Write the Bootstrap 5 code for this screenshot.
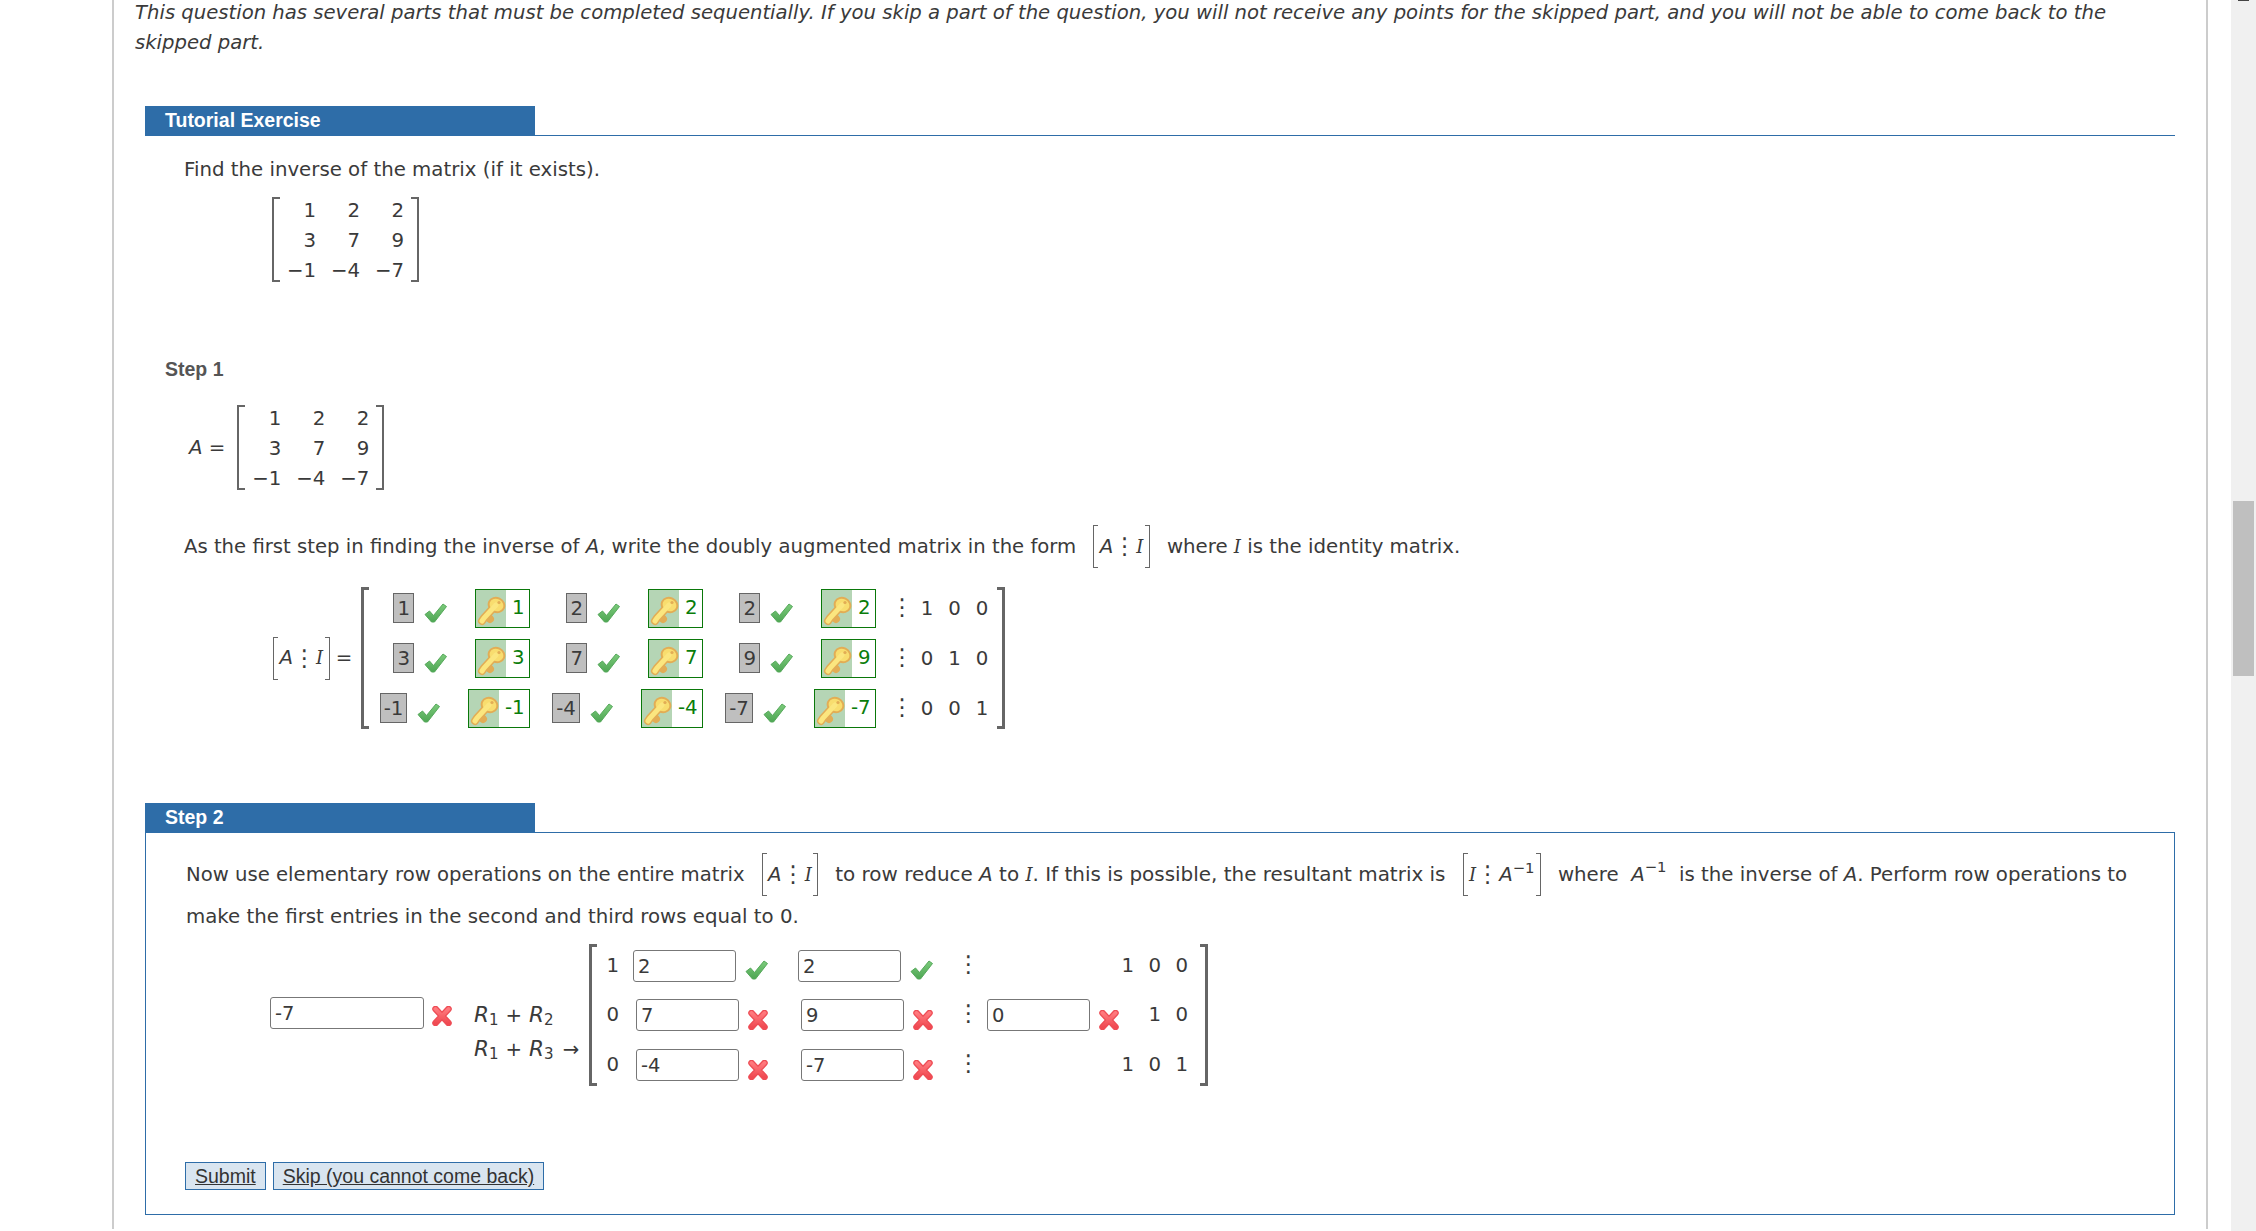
<!DOCTYPE html>
<html lang="en">
<head>
<meta charset="utf-8">
<title>Tutorial Exercise</title>
<link href="https://cdn.jsdelivr.net/npm/bootstrap@5.3.0/dist/css/bootstrap.min.css" rel="stylesheet">
<style>
html,body{height:1231px;overflow:hidden;background:#fff}
body{font-family:"DejaVu Sans",Verdana,sans-serif;font-size:19.75px;line-height:30px;color:#3a3a3a}
.q-shell{width:2231px;flex:none}
.q-col{margin-left:112px;width:2096px;height:1231px;border-left:2px solid #ccc;border-right:2px solid #ccc}
.q-intro{margin:-2px 0 0 21px;width:2000px;font-style:italic;font-size:19.64px}
.q-sec{margin-left:31px;width:2030px}
.q-sec1{margin-top:48px}
.q-bar-wrap{height:30px;border-bottom:1px solid #2e6da8}
.q-bar{width:390px;height:30px;background:#2e6da8;color:#fff;font:bold 19.5px/28px "Liberation Sans",Arial,sans-serif;padding-left:20px}
.q-find{margin:19px 0 12px 39px}
.q-mat{display:flex}
.bk-l,.bk-r{display:block;width:8px;border:2px solid #666;flex:none}
.bk-l{border-right:0}.bk-r{border-left:0}
.q-m3{display:grid;grid-template-columns:44px 44px 44px;grid-auto-rows:30px;justify-items:end;margin:-1px 7px 0 -8px;height:85px;width:132px}
.q-m3>span{display:block}
.q-m1{margin-left:127px;height:85px}
.q-step1{font:bold 19.5px/30px "Liberation Sans",Arial,sans-serif;color:#555;margin:72px 0 21px 20px}
.q-ar{display:flex;height:85px;margin-left:44px;align-items:center}
.q-ar .q-mat{height:85px;margin-left:12px}
.q-line{display:flex;align-items:center;height:43px;white-space:pre}
.q-line .mini{margin:0 17px}
.q-seg{font-size:19.65px}
.q-seg2{font-size:19.95px}
.mini{display:inline-flex;height:43px;align-items:center;flex:none}
.mini .bk-l,.mini .bk-r{width:5px;height:43px;border-width:1.5px}
.mini-in{padding:0 1.5px;display:inline-flex;align-items:center;gap:0}
.q-v{font-style:italic}
.q-i{font-family:"DejaVu Serif",serif;font-style:italic;font-size:18px}
.q-dot{font-size:23px;line-height:1}
.q-as{margin:35px 0 19px 39px}
.q-big{display:flex;margin-left:128px;height:142px;align-items:center}
.q-big .mini{margin-right:6px}
.q-eq{width:25px}
.bb-l,.bb-r{display:block;width:8px;height:142px;border:3px solid #666;flex:none}
.bb-l{border-right:0}.bb-r{border-left:0}
.q-big-in{width:628px;padding:2px 0 0 11px;align-self:flex-start}
.q-brow{display:grid;grid-template-columns:150px 173px 173px 38px 27px 28px 27px;height:50px;align-items:start}
.q-cell{display:flex;justify-content:flex-end;align-items:flex-start}
.q-given{height:30px;margin-top:4px;border:1px solid #666;background:#bfbfbf;padding:0 3px;line-height:29px;margin-right:10px;min-width:18px;text-align:center}
.q-chk{width:23px;height:20px;margin-top:14px;margin-right:28px;flex:none}
.q-key{display:flex;height:39px;border:1px solid #0a780a;color:#0a7d0a;line-height:36px}
.q-key i{display:block;width:30px;height:100%;background:#b5d5b5}
.q-key svg{display:block;width:30px;height:37px}
.q-key b{font-weight:400;padding:0 4px 0 6px}
.q-num{padding-top:5px;text-align:center}
.q-ds{padding:7px 0 0 15px;line-height:1}
.q-sec2{margin-top:74px}
.q-box{border:solid #2e6da8;border-width:0 1px 1px;height:382px;padding:20px 0 0 40px}
.q-l2{margin:6px 0 12px}
.q-ops{display:flex;height:142px}
.q-ans{width:103px;height:32px;flex:none;border:1px solid #777;border-radius:3px;padding:0 4px;font:inherit;font-size:19.5px;line-height:28px;color:#3a3a3a;box-shadow:none}
.q-ans-lg{width:154px;margin:53px 0 0 84px}
.q-x{width:20px;height:20px;flex:none}
.q-x0{margin:62px 22px 0 8px}
.q-r{width:115px;margin-top:54px;line-height:33px;flex:none;white-space:nowrap}
.q-r .q-v{font-size:21.5px}
.q-r sub{font-size:15px;bottom:-.2em}
.q-plus{margin:0 7px}
.q-arr{margin-left:3px}
.q-gmat{display:flex;height:142px}
.q-gin{padding:6px 12px 0 2px}
.q-grow{display:grid;grid-template-columns:25px 144px 165px 43px 143px 15px 27px 27px;grid-template-rows:49px 50px 32px}
.q-c2{display:flex;justify-content:flex-end;align-items:flex-start}
.q-c2 .q-chk{margin:10px 0 0 9px}
.q-c2 .q-x{margin:11px 0 0 9px}
.q-t{text-align:right;line-height:32px}
.q-tl{padding-right:5px}
.q-dots{padding:3px 0 0 24px}
.q-btns{margin:76px 0 0 -1px;display:flex;gap:7px}
.q-btn{height:28px;border:1px solid #2e6da8;border-radius:0;background:#d9e5f0;color:#333;font:19.5px/24px "Liberation Sans",Arial,sans-serif;text-decoration:underline;padding:0 9px}
.q-btn:hover{background:#d9e5f0;color:#333;border-color:#2e6da8}
.q-sb{width:25px;height:1231px;background:#f0f0f0;flex:none;padding:0 2px}
.q-mark{height:1px;background:#444;margin:0 5px 500px}
.q-thumb{height:175px;background:#bfbfbf}
</style>
</head>
<body class="d-flex m-0">
<svg width="0" height="0" class="position-absolute">
<defs>
<linearGradient id="g-chk" x1="0" y1="0" x2="0" y2="1"><stop offset="0" stop-color="#7ccb7c"/><stop offset="1" stop-color="#4ea653"/></linearGradient>
<linearGradient id="g-x" x1="0" y1="0" x2="0" y2="1"><stop offset="0" stop-color="#ff7a7e"/><stop offset="1" stop-color="#f04a52"/></linearGradient>
<symbol id="ic-chk" viewBox="0 0 23 20"><polygon points="1,11.5 5.5,8 9.5,12.5 19,1 22.5,3.5 10.5,19 7.5,19" fill="url(#g-chk)" stroke="#55a85a" stroke-width="1"/></symbol>
<symbol id="ic-x" viewBox="0 0 20 20"><path d="M3.5 3 L16.5 17 M16.5 3 L3.5 17" stroke="#ee4c55" stroke-width="6.5" stroke-linecap="round"/><path d="M3.5 3 L16.5 17 M16.5 3 L3.5 17" stroke="url(#g-x)" stroke-width="4" stroke-linecap="round"/></symbol>
<symbol id="ic-key" viewBox="0 0 30 37"><path d="M20 15 L8 28 L6 31 M11 26 L14 29" stroke="#e2ad55" stroke-width="8" stroke-linecap="round" fill="none"/><ellipse cx="20.5" cy="15" rx="8" ry="7" fill="#f8dd6f" stroke="#e2ad55" stroke-width="2" transform="rotate(25 20.5 15)"/><path d="M20 15 L8 28 L6 31" stroke="#fbe67f" stroke-width="5" stroke-linecap="round" fill="none"/><circle cx="23" cy="12.5" r="1.6" fill="#e2ad55"/></symbol>
</defs>
</svg>
<div class="q-shell">
<main class="q-col">
<p class="q-intro">This question has several parts that must be completed sequentially. If you skip a part of the question, you will not receive any points for the skipped part, and you will not be able to come back to the skipped part.</p>

<section class="q-sec q-sec1">
<div class="q-bar-wrap"><div class="q-bar">Tutorial Exercise</div></div>
<div class="q-find">Find the inverse of the matrix (if it exists).</div>
<div class="q-mat q-m1"><span class="bk-l"></span><div class="q-m3"><span>1</span><span>2</span><span>2</span><span>3</span><span>7</span><span>9</span><span>−1</span><span>−4</span><span>−7</span></div><span class="bk-r"></span></div>
<div class="q-step1">Step 1</div>
<div class="q-ar"><span><span class="q-v">A</span> =</span><div class="q-mat"><span class="bk-l"></span><div class="q-m3"><span>1</span><span>2</span><span>2</span><span>3</span><span>7</span><span>9</span><span>−1</span><span>−4</span><span>−7</span></div><span class="bk-r"></span></div></div>
<div class="q-line q-as"><span class="q-seg">As the first step in finding the inverse of <span class="q-v">A</span>, write the doubly augmented matrix in the form</span><span class="mini"><span class="bk-l"></span><span class="mini-in"><span class="q-v">A</span><span class="q-dot">⋮</span><span class="q-i">I</span></span><span class="bk-r"></span></span>where <span class="q-i">I</span> is the identity matrix.</div>

<div class="q-big">
<span class="mini"><span class="bk-l"></span><span class="mini-in"><span class="q-v">A</span><span class="q-dot">⋮</span><span class="q-i">I</span></span><span class="bk-r"></span></span><span class="q-eq">=</span>
<span class="bb-l"></span>
<div class="q-big-in" id="aug"></div>
<span class="bb-r"></span>
</div>
</section>

<section class="q-sec q-sec2">
<div class="q-bar-wrap"><div class="q-bar">Step 2</div></div>
<div class="q-box">
<div class="q-line"><span class="q-seg">Now use elementary row operations on the entire matrix</span><span class="mini"><span class="bk-l"></span><span class="mini-in"><span class="q-v">A</span><span class="q-dot">⋮</span><span class="q-i">I</span></span><span class="bk-r"></span></span><span class="q-seg2">to row reduce <span class="q-v">A</span> to <span class="q-i">I</span>. If this is possible, the resultant matrix is</span><span class="mini"><span class="bk-l"></span><span class="mini-in"><span class="q-i">I</span><span class="q-dot">⋮</span><span><span class="q-v">A</span><sup>−1</sup></span></span><span class="bk-r"></span></span>where  <span class="q-v">A</span><sup>−1</sup>  is the inverse of <span class="q-v">A</span>. Perform row operations to</div>
<div class="q-l2">make the first entries in the second and third rows equal to 0.</div>
<div class="q-ops">
<input class="form-control q-ans q-ans-lg" value="-7" aria-label="multiplier">
<svg class="q-x q-x0"><use href="#ic-x"/></svg>
<div class="q-r"><span class="q-v">R</span><sub>1</sub><span class="q-plus">+</span><span class="q-v">R</span><sub>2</sub><br><span class="q-v">R</span><sub>1</sub><span class="q-plus">+</span><span class="q-v">R</span><sub>3</sub><span class="q-arr"> →</span></div>
<div class="q-gmat"><span class="bb-l"></span><div class="q-gin"><div class="q-grow" id="grid2"></div></div><span class="bb-r"></span></div>
</div>
<div class="q-btns"><button class="btn q-btn" type="button">Submit</button><button class="btn q-btn" type="button">Skip (you cannot come back)</button></div>
</div>
</section>
</main>
</div>
<aside class="q-sb"><div class="q-mark"></div><div class="q-thumb"></div></aside>

<script>
var chk='<svg class="q-chk"><use href="#ic-chk"/></svg>',xx='<svg class="q-x"><use href="#ic-x"/></svg>',key='<i><svg><use href="#ic-key"/></svg></i>';
var A=[['1','2','2'],['3','7','9'],['-1','-4','-7']],I=[['1','0','0'],['0','1','0'],['0','0','1']];
document.getElementById('aug').innerHTML=A.map(function(r,i){
 return '<div class="q-brow">'+r.map(function(v){return '<div class="q-cell"><span class="q-given">'+v+'</span>'+chk+'<span class="q-key">'+key+'<b>'+v+'</b></span></div>';}).join('')+'<div class="q-ds q-dot">⋮</div>'+I[i].map(function(v){return '<div class="q-num">'+v+'</div>';}).join('')+'</div>';
}).join('');
function inp(v,ic){return '<div class="q-c2"><input class="form-control q-ans" value="'+v+'" aria-label="entry">'+ic+'</div>';}
function t(v){return '<div class="q-t">'+v+'</div>';}
function lead(v){return '<div class="q-t q-tl">'+v+'</div>';}
var dots='<div class="q-dots q-dot">⋮</div>';
document.getElementById('grid2').innerHTML=
 lead('1')+inp('2',chk)+inp('2',chk)+dots+'<div></div>'+t('1')+t('0')+t('0')+
 lead('0')+inp('7',xx)+inp('9',xx)+dots+inp('0',xx)+'<div></div>'+t('1')+t('0')+
 lead('0')+inp('-4',xx)+inp('-7',xx)+dots+'<div></div>'+t('1')+t('0')+t('1');
</script>
<script src="https://cdn.jsdelivr.net/npm/bootstrap@5.3.0/dist/js/bootstrap.bundle.min.js"></script>
</body>
</html>
